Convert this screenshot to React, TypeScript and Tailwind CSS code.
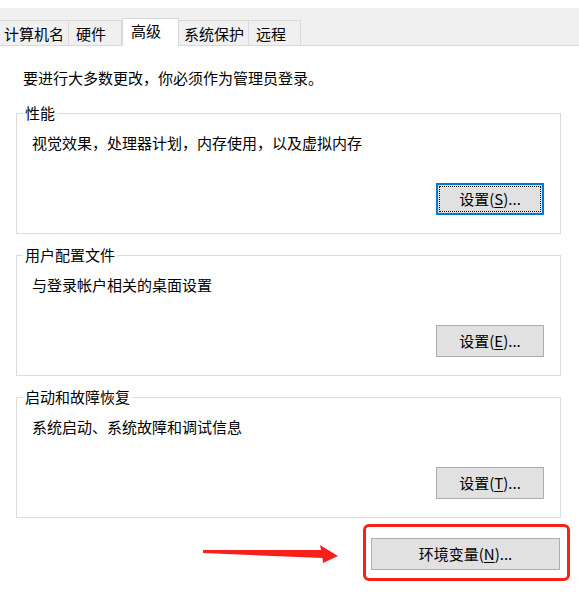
import React from "react";

const tabs = [
  { label: "计算机名", w: "w-[69px]", pl: "pl-[4px]" },
  { label: "硬件", w: "w-[53px]", pl: "pl-[7px]" },
  { label: "高级", w: "w-[57px]", pl: "pl-[8px]", active: true },
  { label: "系统保护", w: "w-[70px]", pl: "pl-[5px]" },
  { label: "远程", w: "w-[52px]", pl: "pl-[7px]" },
];

const Mnemonic = ({ before, letter }: { before: string; letter: string }) => (
  <span>
    {before}(<span className="underline underline-offset-2">{letter}</span>)...
  </span>
);

const WinButton = ({
  before,
  letter,
  focused,
  width = "w-[108px]",
}: {
  before: string;
  letter: string;
  focused?: boolean;
  width?: string;
}) => (
  <button
    className={
      "relative h-[32px] bg-[#e1e1e1] text-[15px] leading-[20px] text-black " +
      width +
      (focused ? " border-2 border-[#0078d7]" : " border border-[#adadad]")
    }
  >
    {focused && <span className="absolute inset-[1px] border border-dotted border-black" />}
    <Mnemonic before={before} letter={letter} />
  </button>
);

const Group = ({
  title,
  text,
  letter,
  focused,
}: {
  title: string;
  text: string;
  letter: string;
  focused?: boolean;
}) => (
  <div className="relative h-[121px] border border-[#dcdcdc]">
    <span className="absolute -top-[11px] left-[6px] bg-white px-[2px] leading-[20px]">{title}</span>
    <div className="pl-[15px] pt-[19px] leading-[20px]">{text}</div>
    <div className="mt-[30px] flex justify-end pr-[16px]">
      <WinButton before="设置" letter={letter} focused={focused} />
    </div>
  </div>
);

export default function App() {
  return (
    <div
      className="relative h-[597px] w-[579px] overflow-hidden bg-white text-[15px] text-black"
      style={{ fontFamily: '"Noto Sans CJK SC", "Noto Sans", sans-serif' }}
    >
      <div className="h-[8px]" />
      <div className="flex h-[38px] items-end border-b border-[#d9d9d9] bg-[#f0f0f0]">
        {tabs.map((t) =>
          t.active ? (
            <div
              key={t.label}
              className={
                "-mb-px h-[28px] border border-b-0 border-[#d9d9d9] bg-white pt-[2px] leading-[20px] " +
                t.w +
                " " +
                t.pl
              }
            >
              {t.label}
            </div>
          ) : (
            <div
              key={t.label}
              className={
                "h-[25px] border-r border-t border-[#d9d9d9] bg-[#f0f0f0] pt-[3px] leading-[20px] " +
                t.w +
                " " +
                t.pl
              }
            >
              {t.label}
            </div>
          )
        )}
      </div>

      <div className="pl-[16px] pr-[18px]">
        <div className="mt-[22px] pl-[7px] leading-[20px]">要进行大多数更改，你必须作为管理员登录。</div>

        <div className="mt-[25px] flex flex-col gap-[21px]">
          <Group title="性能" text="视觉效果，处理器计划，内存使用，以及虚拟内存" letter="S" focused />
          <Group title="用户配置文件" text="与登录帐户相关的桌面设置" letter="E" />
          <Group title="启动和故障恢复" text="系统启动、系统故障和调试信息" letter="T" />
        </div>

        <div className="mt-[20px] flex justify-end pr-[1px]">
          <WinButton before="环境变量" letter="N" width="w-[189px]" />
        </div>
      </div>

      {/* annotation: red box + arrow */}
      <div className="pointer-events-none absolute left-[363px] top-[524px] h-[57px] w-[207px] rounded-[6px] border-[3px] border-[#f5221b]" />
      <svg className="pointer-events-none absolute left-0 top-0" width="579" height="597">
        <polygon
          points="203,550 321,550 320,545 338,556 323,563 322.5,558 203,553"
          fill="#f5221b"
        />
      </svg>
    </div>
  );
}
